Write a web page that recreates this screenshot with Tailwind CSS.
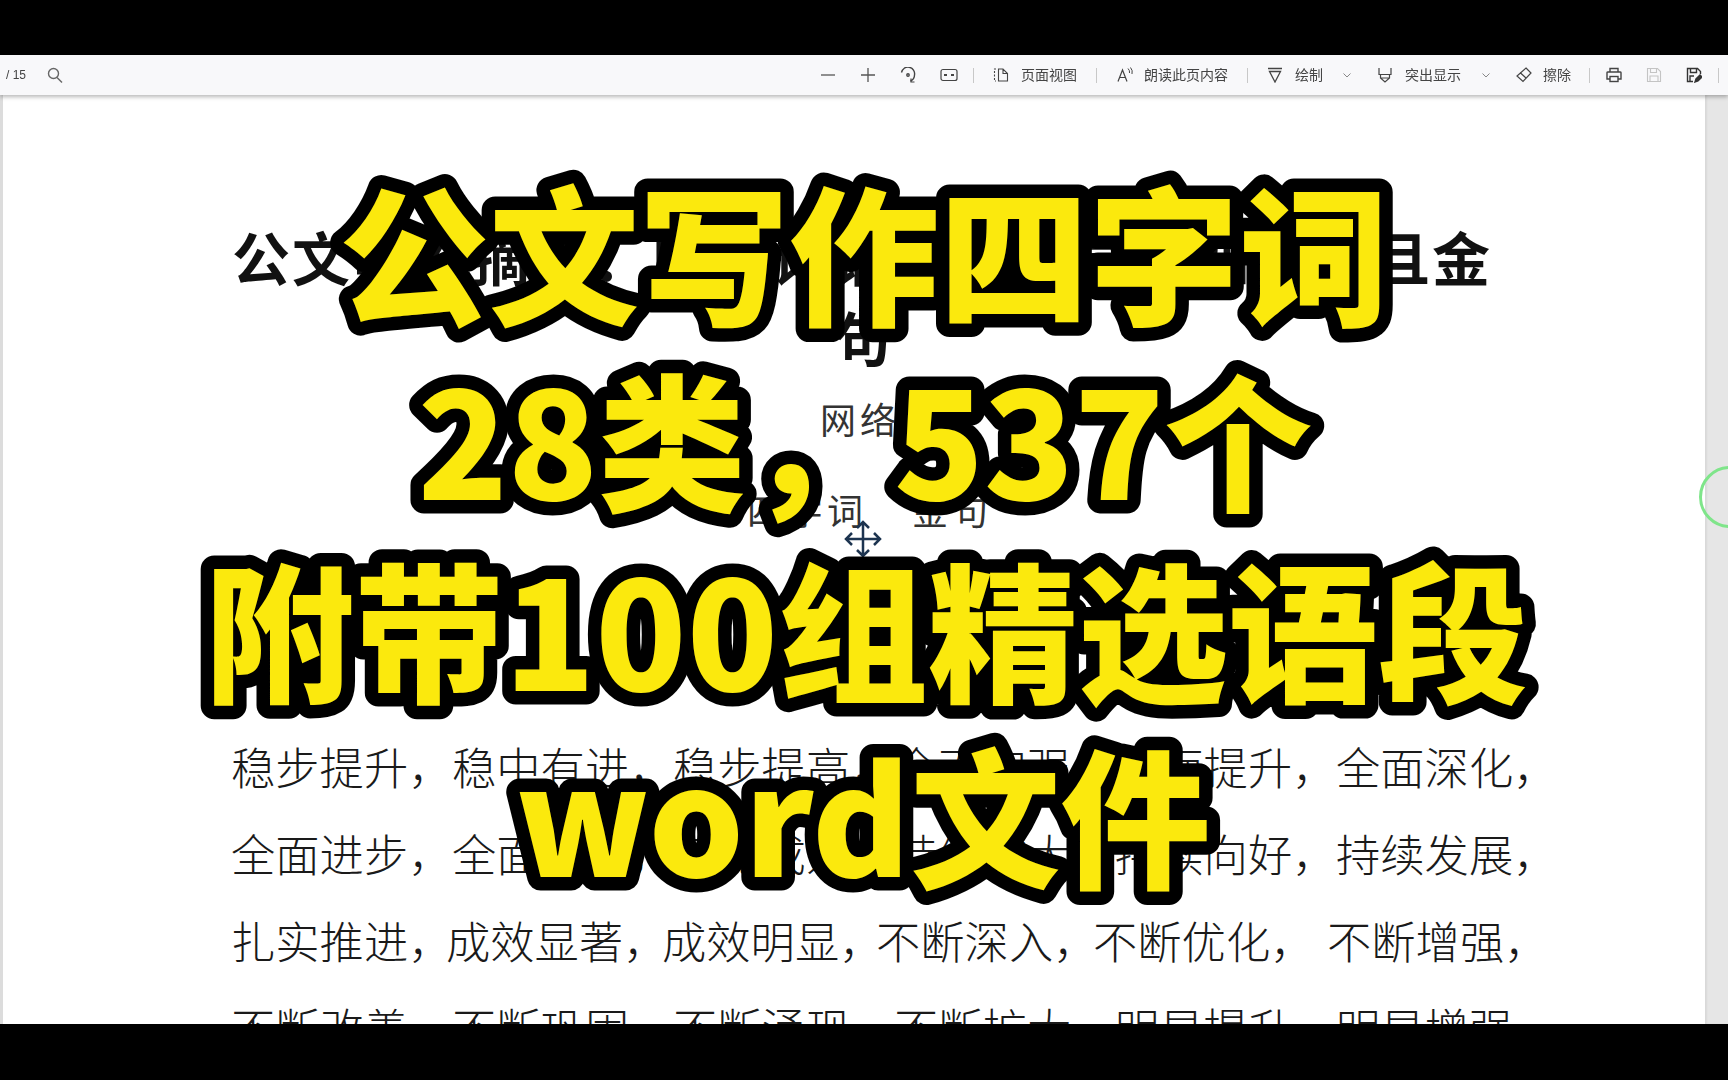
<!DOCTYPE html>
<html lang="zh-CN">
<head>
    <meta charset="UTF-8">
    <title>公文写作四字词</title>
    <script src="https://cdn.jsdelivr.net/npm/@tailwindcss/browser@4"></script>
</head>
<body class="bg-black [font-family:'Noto_Sans_CJK_SC',sans-serif]">
<div class="relative w-[1728px] h-[1080px] overflow-hidden flex flex-col bg-black">
    <div class="h-[55px] shrink-0 bg-black"></div>

    <!-- pdf toolbar -->
    <div class="relative z-10 h-[40px] shrink-0 flex items-center bg-[#f8f8fa] shadow-[0_2px_4px_rgba(0,0,0,0.28)] text-[14px] text-[#444] blur-[0.4px]">
        <span class="ml-[6px] text-[12px] w-[24px] [font-family:'Liberation_Sans',sans-serif]">/ 15</span>
        <svg class="ml-[17px] w-[16px] h-[16px]" viewBox="0 0 16 16" fill="none" stroke="#666" stroke-width="1.4"><circle cx="6.5" cy="6.5" r="5"/><path d="M10 10.5l5 5"/></svg>
        <div class="flex-1"></div>

        <svg class="w-[16px] h-[16px]" viewBox="0 0 16 16" fill="none" stroke="#555" stroke-width="1.3"><path d="M1 8h14"/></svg>
        <svg class="ml-[24px] w-[16px] h-[16px]" viewBox="0 0 16 16" fill="none" stroke="#555" stroke-width="1.3"><path d="M1 8h14M8 1v14"/></svg>
        <svg class="ml-[24px] w-[16px] h-[16px]" viewBox="0 0 16 16" fill="none" stroke="#444" stroke-width="1.4"><path d="M1.5 5.5A6.5 6.5 0 0 1 14.5 8a6.5 6.5 0 0 1-4 6"/><path d="M11 11.5v3.5h3.5" stroke-width="1.2"/><circle cx="8" cy="8" r="1.2"/></svg>
        <svg class="ml-[24px] w-[18px] h-[16px]" viewBox="0 0 18 16" fill="none" stroke="#444" stroke-width="1.2"><rect x="1" y="2.5" width="16" height="11" rx="2"/><path d="M4 8h3M11 8h3" stroke-width="1.8"/></svg>
        <div class="ml-[15px] w-px h-[15px] bg-[#c8c8c8]"></div>

        <svg class="ml-[19px] w-[16px] h-[16px]" viewBox="0 0 16 16" fill="none" stroke="#444" stroke-width="1.1"><path d="M3 2H1.5v12H3" stroke-dasharray="2 1.5"/><path d="M5.5 2H10l4.5 4.5V14h-9zM10 2v4.5h4.5"/></svg>
        <span class="ml-[12px] w-[57px] -mt-[2px]">页面视图</span>
        <div class="ml-[18px] w-px h-[15px] bg-[#c8c8c8]"></div>

        <svg class="ml-[20px] w-[16px] h-[16px]" viewBox="0 0 16 16" fill="none" stroke="#444" stroke-width="1.2"><path d="M1 14.5L5.5 3l4.5 11.5M2.8 10.5h5.4"/><path d="M11 1.5q2 2 1.5 4.5M13.5 .5q2.5 3 1.5 6.5" stroke-width="1"/></svg>
        <span class="ml-[11px] w-[85px] -mt-[2px]">朗读此页内容</span>
        <div class="ml-[18px] w-px h-[15px] bg-[#c8c8c8]"></div>

        <svg class="ml-[19px] w-[16px] h-[16px]" viewBox="0 0 16 16" fill="none" stroke="#444" stroke-width="1.3"><path d="M1 1.5h14M2.5 4.5L8 15l5.500-10.500z"/></svg>
        <span class="ml-[12px] w-[28px] -mt-[2px]">绘制</span>
        <svg class="ml-[20px] w-[8px] h-[8px]" viewBox="0 0 8 8" fill="none" stroke="#888" stroke-width="1"><path d="M.5 2.5L4 6l3.500-3.500"/></svg>

        <svg class="ml-[26px] w-[16px] h-[16px]" viewBox="0 0 16 16" fill="none" stroke="#444" stroke-width="1.2"><path d="M2 1v6.500h12V1M3.500 7.500V11L8 15l4.500-4V7.500M3.500 11h9"/></svg>
        <span class="ml-[12px] w-[56px] -mt-[2px]">突出显示</span>
        <svg class="ml-[21px] w-[8px] h-[8px]" viewBox="0 0 8 8" fill="none" stroke="#888" stroke-width="1"><path d="M.5 2.5L4 6l3.500-3.500"/></svg>

        <svg class="ml-[25px] w-[17px] h-[16px]" viewBox="0 0 17 16" fill="none" stroke="#444" stroke-width="1.2"><path d="M11 1l5 5-8 8.500L2 9zM5 5.500l6 5.500"/></svg>
        <span class="ml-[11px] w-[28px] -mt-[2px]">擦除</span>
        <div class="ml-[18px] w-px h-[15px] bg-[#c8c8c8]"></div>

        <svg class="ml-[16px] w-[16px] h-[16px]" viewBox="0 0 16 16" fill="none" stroke="#444" stroke-width="1.4"><path d="M4 5V1.500h8V5M4 12H1V5.500Q1 5 2 5h12q1 0 1 .5V12h-3"/><rect x="4" y="9.500" width="8" height="5"/></svg>
        <svg class="ml-[24px] w-[16px] h-[16px]" viewBox="0 0 16 16" fill="none" stroke="#c4c4c4" stroke-width="1.1"><path d="M1.500 1.500h10l3 3v10h-13zM4.500 1.500v4h6v-4M4 14.500V9h8v5.500"/></svg>
        <svg class="ml-[24px] w-[16px] h-[16px]" viewBox="0 0 16 16" fill="none" stroke="#333" stroke-width="1.4"><path d="M7 14.500H1.500v-13h10l3 3V7M4.500 1.500v4h6v-4M4 14V9h4"/><path d="M9 15l1-3 4-4 2 2-4 4z" fill="#333"/></svg>
        <div class="ml-[16px] mr-[9px] w-px h-[15px] bg-[#c8c8c8]"></div>
    </div>

    <!-- document area -->
    <div class="flex-1 min-h-0 flex">
        <div class="w-[3px] bg-[#dcdcdc]"></div>
        <div class="w-[1702px] bg-white overflow-hidden text-[#222]">
            <div class="pt-[131px] pl-[229px] h-[191px] text-[58px] leading-[60px] font-bold tracking-[2px] text-[#111] whitespace-nowrap">公文写作摘录：四字词语大全，高频四字词且金</div>
            <div class="mt-[20px] pl-[830px] h-[60px] text-[58px] leading-[60px] font-bold text-[#111]">句</div>
            <div class="mt-[27px] pl-[817px] h-[50px] text-[36px] leading-[50px] tracking-[4px] text-[#333]">网络</div>
            <div class="mt-[41px] pl-[744px] h-[50px] text-[36px] leading-[50px] tracking-[4px] text-[#333] whitespace-pre">四字词<span class="ml-[45px]">金句</span></div>

            <div class="mt-[189px] pl-[228px] text-[44.3px] leading-[87px] font-light text-[#1a1a1a]">
                <div class="flex h-[87px] whitespace-nowrap"><span class="w-[221px]">稳步提升，</span><span class="w-[221px]">稳中有进，</span><span class="w-[221px]">稳步提高，</span><span class="w-[221px]">全面加强，</span><span class="w-[221px]">全面提升，</span><span>全面深化，</span></div>
                <div class="flex h-[87px] whitespace-nowrap"><span class="w-[221px]">全面进步，</span><span class="w-[221px]">全面落实，</span><span class="w-[221px]">初见成效，</span><span class="w-[221px]">持续扩大，</span><span class="w-[221px]">持续向好，</span><span>持续发展，</span></div>
                <div class="flex h-[87px] whitespace-nowrap"><span class="w-[215px]">扎实推进，</span><span class="w-[216px]">成效显著，</span><span class="w-[214px]">成效明显，</span><span class="w-[217px]">不断深入，</span><span class="w-[234px]">不断优化，</span><span>不断增强，</span></div>
                <div class="flex h-[87px] whitespace-nowrap"><span class="w-[221px]">不断改善，</span><span class="w-[221px]">不断巩固，</span><span class="w-[221px]">不断涌现，</span><span class="w-[221px]">不断扩大，</span><span class="w-[221px]">明显提升，</span><span>明显增强，</span></div>
            </div>
        </div>
        <div class="flex-1 bg-[#e6e6e6] shadow-[inset_2px_0_2px_rgba(0,0,0,0.06)]"></div>
    </div>

    <div class="h-[56px] shrink-0 bg-black relative z-10"></div>

    <!-- move cursor over the page -->
    <svg class="absolute left-[843px] top-[519px] w-[40px] h-[40px]" viewBox="0 0 40 40" fill="none" stroke="#1d3450" stroke-width="2.5"><path d="M20 3v34M3 20h34M14 9l6-6 6 6M14 31l6 6 6-6M9 14l-6 6 6 6M31 14l6 6-6 6"/></svg>
    <!-- green pointer ring -->
    <div class="absolute left-[1699px] top-[466px] w-[62px] h-[62px] rounded-full border-[3px] border-[#7fe58a]"></div>

    <!-- video title -->
    <svg class="absolute inset-0 w-[1728px] h-[1080px]" viewBox="0 0 1728 1080">
        <g class="fill-[#fbe90d] stroke-black stroke-[27px] [paint-order:stroke] [stroke-linejoin:round] font-black text-[151px]" text-anchor="middle">
            <text x="864" y="314" class="text-[150px]">公文写作四字词</text>
            <text x="865" y="500" class="text-[148px]">28类，537个</text>
            <text x="866" y="691" class="text-[150px]">附带100组精选语段</text>
            <text x="863" y="877" class="text-[150px]">word文件</text>
        </g>
    </svg>
</div>
</body>
</html>
